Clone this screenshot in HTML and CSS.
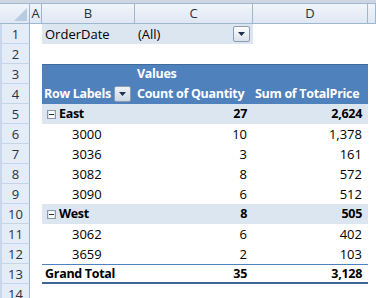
FILE: index.html
```html
<!DOCTYPE html>
<html>
<head>
  <title>Pivot Table</title>
  <link rel="stylesheet" href="styles.css">
</head>
<body>
  <div class="topbar"></div>

  <div class="sheet">
    <!-- column headers -->
    <div class="ch corner"><span class="tri"></span></div>
    <div class="ch">A</div>
    <div class="ch">B</div>
    <div class="ch">C</div>
    <div class="ch">D</div>
    <div class="ch"></div>

    <!-- row 1: report filter -->
    <div class="rh">1</div>
    <div></div>
    <div class="cell filter">OrderDate</div>
    <div class="cell filter">(All)<span class="dd"><svg width="7" height="4" viewBox="0 0 7 4"><path d="M0 0h7L3.5 4z" fill="#1f2f4f"/></svg></span></div>
    <div></div>
    <div></div>

    <div class="rh">2</div>
    <div></div><div></div><div></div><div></div><div></div>

    <!-- row 3/4: pivot header -->
    <div class="rh">3</div>
    <div></div>
    <div class="cell hd top"></div>
    <div class="cell hd top">Values</div>
    <div class="cell hd top"></div>
    <div></div>

    <div class="rh">4</div>
    <div></div>
    <div class="cell hd">Row Labels<span class="dd dd-hd"><svg width="7" height="4" viewBox="0 0 7 4"><path d="M0 0h7L3.5 4z" fill="#1f2f4f"/></svg></span></div>
    <div class="cell hd">Count of Quantity</div>
    <div class="cell hd">Sum of TotalPrice</div>
    <div></div>

    <!-- East -->
    <div class="rh">5</div>
    <div></div>
    <div class="cell grp"><span class="minus"></span>East</div>
    <div class="cell grp num">27</div>
    <div class="cell grp num">2,624</div>
    <div></div>

    <div class="rh">6</div>
    <div></div>
    <div class="cell item">3000</div>
    <div class="cell num">10</div>
    <div class="cell num">1,378</div>
    <div></div>

    <div class="rh">7</div>
    <div></div>
    <div class="cell item">3036</div>
    <div class="cell num">3</div>
    <div class="cell num">161</div>
    <div></div>

    <div class="rh">8</div>
    <div></div>
    <div class="cell item">3082</div>
    <div class="cell num">8</div>
    <div class="cell num">572</div>
    <div></div>

    <div class="rh">9</div>
    <div></div>
    <div class="cell item">3090</div>
    <div class="cell num">6</div>
    <div class="cell num">512</div>
    <div></div>

    <!-- West -->
    <div class="rh">10</div>
    <div></div>
    <div class="cell grp"><span class="minus"></span>West</div>
    <div class="cell grp num">8</div>
    <div class="cell grp num">505</div>
    <div></div>

    <div class="rh">11</div>
    <div></div>
    <div class="cell item">3062</div>
    <div class="cell num">6</div>
    <div class="cell num">402</div>
    <div></div>

    <div class="rh">12</div>
    <div></div>
    <div class="cell item">3659</div>
    <div class="cell num">2</div>
    <div class="cell num">103</div>
    <div></div>

    <!-- grand total -->
    <div class="rh">13</div>
    <div></div>
    <div class="cell total">Grand Total</div>
    <div class="cell total num">35</div>
    <div class="cell total num">3,128</div>
    <div></div>

    <div class="rh">14</div>
    <div></div><div></div><div></div><div></div><div></div>
  </div>
</body>
</html>
```

FILE: styles.css
```css
body {
  margin: 0;
  font-family: "Open Sans", sans-serif;
  font-size: 13px;
  color: #000;
  background: #fff;
  overflow: hidden;
}

.topbar {
  height: 3px;
  background: #cdd6e2;
  border-bottom: 1px solid #9eb6ce;
}

/* sheet grid */
.sheet {
  display: grid;
  grid-template-columns: 30px 12px 93px 118px 115px 8px;
  grid-auto-rows: 20px;
}

.cell {
  box-sizing: border-box;
  padding: 0 3px;
  line-height: 20px;
  white-space: nowrap;
  overflow: hidden;
}

/* column + row headers */
.ch {
  box-sizing: border-box;
  background: linear-gradient(#f1f5fb, #dfe7f2);
  border-right: 1px solid #9eb6ce;
  border-bottom: 1px solid #9eb6ce;
  text-align: center;
  line-height: 19px;
  color: #27313f;
}

.corner {
  position: relative;
}

.tri {
  position: absolute;
  right: 2px;
  bottom: 2px;
  width: 0;
  height: 0;
  border-left: 13px solid transparent;
  border-bottom: 13px solid #b9cbe0;
}

.rh {
  box-sizing: border-box;
  background: #e4ecf7;
  border-right: 1px solid #9eb6ce;
  border-bottom: 1px solid #c5d5e8;
  border-left: 2px solid #c8d7ea;
  text-align: center;
  line-height: 20px;
  color: #27313f;
}

/* report filter */
.filter {
  background: #dce6f1;
}

.dd {
  float: right;
  box-sizing: border-box;
  width: 17px;
  height: 16px;
  margin-top: 2px;
  border: 1px solid #8d9bb0;
  border-radius: 2px;
  background: linear-gradient(#fbfcfe, #dbe2ec);
  display: flex;
  align-items: center;
  justify-content: center;
}

.dd-hd {
  float: none;
  display: inline-flex;
  vertical-align: top;
  margin-left: 3px;
  background: linear-gradient(#eef2f8, #cfd9e6);
}

/* pivot table */
.hd,
.grp,
.total {
  font-weight: bold;
  font-size: 12.5px;
  letter-spacing: -0.3px;
}

.hd {
  background: #4f81bd;
  color: #fff;
  padding-left: 2px;
}

.hd.top {
  box-shadow: inset 0 1px #3f6b9f;
}

.grp {
  background: #dce6f1;
}

.minus {
  display: inline-block;
  box-sizing: border-box;
  width: 9px;
  height: 9px;
  margin: 0 3px 0 2px;
  border: 1px solid #8a97a8;
  background: linear-gradient(#fff 3px, #333 3px, #333 4px, #fff 4px);
  background-size: 5px 7px;
  background-position: 1px 0;
  background-repeat: no-repeat;
  vertical-align: -1px;
}

.item {
  padding-left: 30px;
}

.num {
  text-align: right;
  padding-right: 6px;
}

.total {
  border-top: 1px solid #4f81bd;
  border-bottom: 2px solid #3c6698;
  line-height: 17px;
}
```
